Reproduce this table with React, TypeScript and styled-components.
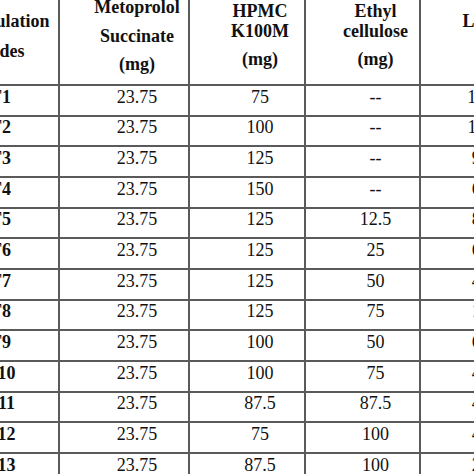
import React from 'react';
import styled, { createGlobalStyle } from 'styled-components';

const GlobalStyle = createGlobalStyle`
  html, body {
    margin: 0;
    padding: 0;
    background: #ffffff;
    overflow: hidden;
  }
`;

const StyledPage = styled.div`
  width: 474px;
  height: 474px;
  overflow: hidden;
  background-color: #ffffff;
  font-family: 'Liberation Serif', 'Times New Roman', serif;
  color: #111111;
`;

const StyledTable = styled.div`
  display: grid;
  grid-template-columns: 140px 128px 114px 113px 116px;
  grid-template-rows: 84px;
  grid-auto-rows: 28.67px;
  gap: 2px;
  width: max-content;
  margin-left: -82px;
  background-color: #5a5a5a;
`;

const StyledHeadCell = styled.div`
  background-color: #ffffff;
  display: flex;
  flex-direction: column;
  align-items: center;
  padding-left: 26px;
  overflow: hidden;
  font-weight: bold;
  font-size: 18px;
`;

const StyledHeadStack = styled.div<{ $top: number }>`
  display: flex;
  flex-direction: column;
  align-items: center;
  margin-top: ${(p) => p.$top}px;
`;

const StyledHeadLine = styled.div<{ $lh: number; $gap?: number }>`
  line-height: ${(p) => p.$lh}px;
  margin-top: ${(p) => p.$gap ?? 0}px;
  white-space: nowrap;
`;

const StyledCell = styled.div<{ $bold?: boolean }>`
  background-color: #ffffff;
  display: flex;
  align-items: center;
  justify-content: center;
  padding-left: 26px;
  padding-bottom: 6px;
  font-size: 18px;
  font-weight: ${(p) => (p.$bold ? 'bold' : 'normal')};
  white-space: nowrap;
  overflow: hidden;
`;

const rows = [
  ['F1', '23.75', '75', '--', '141.25'],
  ['F2', '23.75', '100', '--', '116.25'],
  ['F3', '23.75', '125', '--', '91.25'],
  ['F4', '23.75', '150', '--', '66.25'],
  ['F5', '23.75', '125', '12.5', '83.75'],
  ['F6', '23.75', '125', '25', '66.25'],
  ['F7', '23.75', '125', '50', '41.25'],
  ['F8', '23.75', '125', '75', '16.25'],
  ['F9', '23.75', '100', '50', '66.25'],
  ['F10', '23.75', '100', '75', '41.25'],
  ['F11', '23.75', '87.5', '87.5', '41.25'],
  ['F12', '23.75', '75', '100', '41.25'],
  ['F13', '23.75', '87.5', '100', '28.75'],
];

const App = () => {
  return (
    <StyledPage>
      <GlobalStyle />
      <StyledTable>
        <StyledHeadCell>
          <StyledHeadStack $top={6}>
            <StyledHeadLine $lh={30}>Formulation</StyledHeadLine>
            <StyledHeadLine $lh={30}>Codes</StyledHeadLine>
          </StyledHeadStack>
        </StyledHeadCell>
        <StyledHeadCell>
          <StyledHeadStack $top={-7}>
            <StyledHeadLine $lh={28.5}>Metoprolol</StyledHeadLine>
            <StyledHeadLine $lh={28.5}>Succinate</StyledHeadLine>
            <StyledHeadLine $lh={28.5}>(mg)</StyledHeadLine>
          </StyledHeadStack>
        </StyledHeadCell>
        <StyledHeadCell>
          <StyledHeadStack $top={1}>
            <StyledHeadLine $lh={20}>HPMC</StyledHeadLine>
            <StyledHeadLine $lh={20}>K100M</StyledHeadLine>
            <StyledHeadLine $lh={28} $gap={4}>(mg)</StyledHeadLine>
          </StyledHeadStack>
        </StyledHeadCell>
        <StyledHeadCell>
          <StyledHeadStack $top={1}>
            <StyledHeadLine $lh={20}>Ethyl</StyledHeadLine>
            <StyledHeadLine $lh={20}>cellulose</StyledHeadLine>
            <StyledHeadLine $lh={28} $gap={4}>(mg)</StyledHeadLine>
          </StyledHeadStack>
        </StyledHeadCell>
        <StyledHeadCell>
          <StyledHeadStack $top={6}>
            <StyledHeadLine $lh={30}>Lactose</StyledHeadLine>
            <StyledHeadLine $lh={30}>(mg)</StyledHeadLine>
          </StyledHeadStack>
        </StyledHeadCell>
        {rows.map((row) =>
          row.map((value, i) => (
            <StyledCell key={`${row[0]}-${i}`} $bold={i === 0}>
              {value}
            </StyledCell>
          ))
        )}
      </StyledTable>
    </StyledPage>
  );
};

export default App;
